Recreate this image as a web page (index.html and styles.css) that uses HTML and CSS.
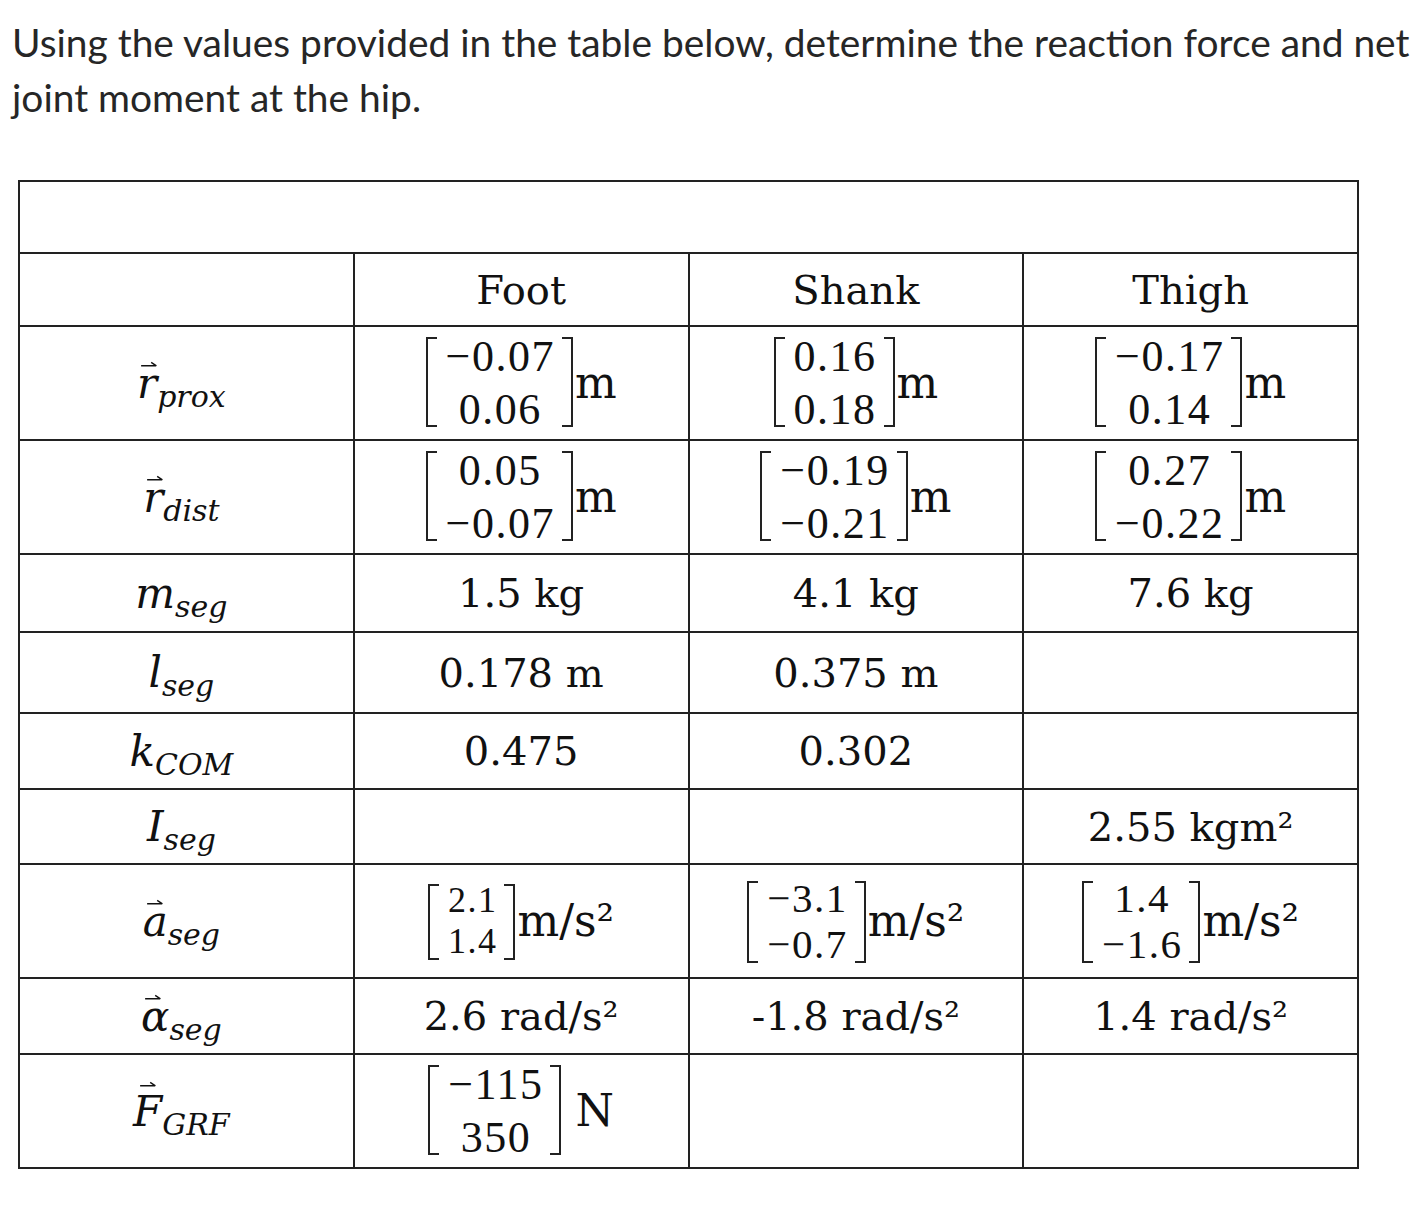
FILE: index.html
```html
<!DOCTYPE html>
<html>
<head>
<meta charset="utf-8">
<title>Hip reaction force</title>
<link rel="stylesheet" href="styles.css">
</head>
<body>
<p class="prompt">Using the values provided in the table below, determine the reaction force and net joint moment at the hip.</p>
<table class="data">
  <colgroup><col><col><col><col></colgroup>
  <tr class="r-top"><td colspan="4"></td></tr>
  <tr class="r-head">
    <td></td>
    <td class="hd">Foot</td>
    <td class="hd">Shank</td>
    <td class="hd">Thigh</td>
  </tr>
  <tr class="r-tall">
    <td class="lab"><span class="sym"><span class="vec">r<svg class="arrow" viewBox="0 0 20 8"><path d="M1 5.5H18M12.5 1.5L18.5 5.5"/></svg></span><sub>prox</sub></span></td>
    <td><div class="mv"><span class="mat"><span class="br bl"></span><span class="cells"><span>−0.07</span><span>0.06</span></span><span class="br brr"></span></span><span class="unit">m</span></div></td>
    <td><div class="mv"><span class="mat"><span class="br bl"></span><span class="cells"><span>0.16</span><span>0.18</span></span><span class="br brr"></span></span><span class="unit">m</span></div></td>
    <td><div class="mv"><span class="mat"><span class="br bl"></span><span class="cells"><span>−0.17</span><span>0.14</span></span><span class="br brr"></span></span><span class="unit">m</span></div></td>
  </tr>
  <tr class="r-tall">
    <td class="lab"><span class="sym"><span class="vec">r<svg class="arrow" viewBox="0 0 20 8"><path d="M1 5.5H18M12.5 1.5L18.5 5.5"/></svg></span><sub>dist</sub></span></td>
    <td><div class="mv"><span class="mat"><span class="br bl"></span><span class="cells"><span>0.05</span><span>−0.07</span></span><span class="br brr"></span></span><span class="unit">m</span></div></td>
    <td><div class="mv"><span class="mat"><span class="br bl"></span><span class="cells"><span>−0.19</span><span>−0.21</span></span><span class="br brr"></span></span><span class="unit">m</span></div></td>
    <td><div class="mv"><span class="mat"><span class="br bl"></span><span class="cells"><span>0.27</span><span>−0.22</span></span><span class="br brr"></span></span><span class="unit">m</span></div></td>
  </tr>
  <tr class="r-m">
    <td class="lab"><span class="sym">m<sub>seg</sub></span></td>
    <td class="val">1.5 kg</td>
    <td class="val">4.1 kg</td>
    <td class="val">7.6 kg</td>
  </tr>
  <tr class="r-l">
    <td class="lab"><span class="sym">l<sub>seg</sub></span></td>
    <td class="val">0.178 m</td>
    <td class="val">0.375 m</td>
    <td></td>
  </tr>
  <tr class="r-k">
    <td class="lab"><span class="sym">k<sub>COM</sub></span></td>
    <td class="val">0.475</td>
    <td class="val">0.302</td>
    <td></td>
  </tr>
  <tr class="r-i">
    <td class="lab"><span class="sym">I<sub>seg</sub></span></td>
    <td></td>
    <td></td>
    <td class="val">2.55 kgm²</td>
  </tr>
  <tr class="r-tall">
    <td class="lab"><span class="sym"><span class="vec">a<svg class="arrow" viewBox="0 0 20 8"><path d="M1 5.5H18M12.5 1.5L18.5 5.5"/></svg></span><sub>seg</sub></span></td>
    <td><div class="mv"><span class="mat sm"><span class="br bl"></span><span class="cells"><span>2.1</span><span>1.4</span></span><span class="br brr"></span></span><span class="unit">m/s²</span></div></td>
    <td><div class="mv"><span class="mat md"><span class="br bl"></span><span class="cells"><span>−3.1</span><span>−0.7</span></span><span class="br brr"></span></span><span class="unit">m/s²</span></div></td>
    <td><div class="mv"><span class="mat md"><span class="br bl"></span><span class="cells"><span>1.4</span><span>−1.6</span></span><span class="br brr"></span></span><span class="unit">m/s²</span></div></td>
  </tr>
  <tr class="r-k">
    <td class="lab"><span class="sym"><span class="vec">α<svg class="arrow" viewBox="0 0 20 8"><path d="M1 5.5H18M12.5 1.5L18.5 5.5"/></svg></span><sub>seg</sub></span></td>
    <td class="val">2.6 rad/s²</td>
    <td class="val">-1.8 rad/s²</td>
    <td class="val">1.4 rad/s²</td>
  </tr>
  <tr class="r-tall">
    <td class="lab"><span class="sym"><span class="vec cap">F<svg class="arrow" viewBox="0 0 20 8"><path d="M1 5.5H18M12.5 1.5L18.5 5.5"/></svg></span><sub>GRF</sub></span></td>
    <td><div class="mv"><span class="mat"><span class="br bl"></span><span class="cells"><span>−115</span><span>350</span></span><span class="br brr"></span></span><span class="unit unit-n">N</span></div></td>
    <td></td>
    <td></td>
  </tr>
</table>
</body>
</html>
```

FILE: styles.css
```css
html, body {
  margin: 0;
  padding: 0;
  background: #ffffff;
}

body {
  color: #111;
}

.prompt {
  margin: 15px 0 0 12px;
  width: 1406px;
  font-family: Lato, "Open Sans", sans-serif;
  font-size: 38.9px;
  line-height: 55px;
  color: #262626;
}

.data {
  margin: 55px 0 0 18px;
  border-collapse: collapse;
  table-layout: fixed;
  width: 1341px;
}

.data col {
  width: 25%;
}

.data td {
  border: 2px solid #222;
  padding: 0;
  text-align: center;
  vertical-align: middle;
  color: #111;
}

.r-top { height: 72px; }
.r-head { height: 73px; }
.r-tall { height: 114px; }
.r-m { height: 78px; }
.r-l { height: 81px; }
.r-k { height: 76px; }
.r-i { height: 75px; }

.hd {
  font-family: "DejaVu Serif", serif;
  font-size: 40px;
}

.val {
  font-family: "DejaVu Serif", serif;
  font-size: 40px;
}

.lab {
  padding-right: 10px !important;
}

.sym {
  font-family: "DejaVu Serif", serif;
  font-style: italic;
  font-size: 42px;
  white-space: nowrap;
}

.sym sub {
  font-size: 30px;
  vertical-align: -9px;
  line-height: 0;
}

.vec {
  position: relative;
  display: inline-block;
}

.arrow {
  position: absolute;
  left: 3px;
  top: 2px;
  width: 18px;
  height: 7px;
  fill: none;
  stroke: #111;
  stroke-width: 1.6;
  overflow: visible;
}

.vec.cap .arrow {
  top: -6px;
  left: 6px;
}

.mv {
  display: inline-flex;
  align-items: center;
  vertical-align: middle;
}

.mat {
  display: inline-flex;
  align-items: stretch;
  font-family: "Liberation Serif", serif;
  font-size: 44px;
  line-height: 53px;
  letter-spacing: 1.5px;
}

.mat.md {
  font-size: 41px;
  line-height: 46px;
}

.mat.sm {
  font-size: 36px;
  line-height: 41px;
}

.mat.sm .br {
  margin: 4px 0 2px;
}

.mat.md .br {
  margin: 6px 0 4px;
}

.cells {
  display: flex;
  flex-direction: column;
  align-items: center;
  padding: 0 7px 0 9px;
}

.br {
  width: 9px;
  border: 2px solid #222;
  margin: 7px 0 9px;
}

.bl { border-right: none; }
.brr { border-left: none; }

.unit {
  font-family: "DejaVu Serif", serif;
  font-size: 44px;
  line-height: 1;
  margin-left: 2px;
}

.unit-n {
  margin-left: 14px;
}
```
